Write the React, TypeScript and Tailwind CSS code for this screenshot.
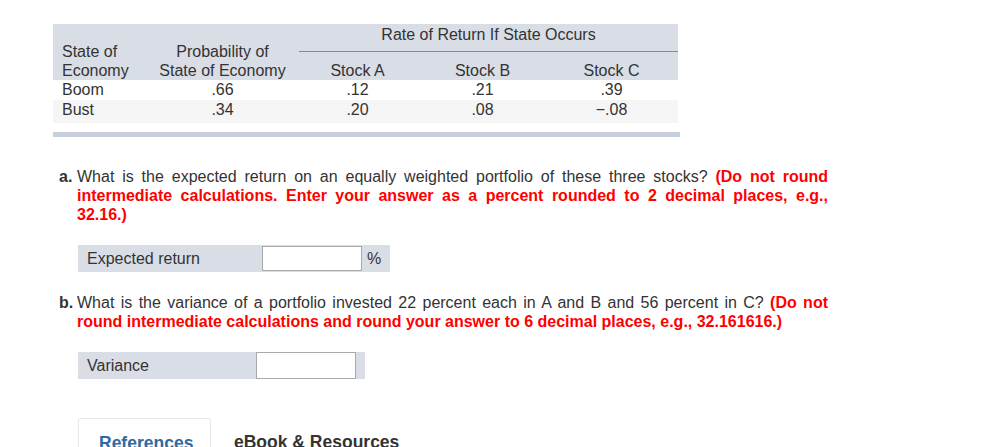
import React from "react";

const font = { fontFamily: '"Liberation Sans", Arial, sans-serif' };

export default function App() {
  return (
    <div className="w-[1001px] h-[447px] overflow-hidden bg-white text-[#333]" style={font}>
      <div className="pl-[53px] pt-[24px]">
        {/* Table */}
        <div className="w-[625px] text-[16px]">
          <div className="bg-[#d9dde6] grid grid-cols-[97px_145px_125px_125px_133px] grid-rows-[28px_28px] h-[56px]">
            <div className="row-span-2 col-start-1 row-start-1 flex flex-col justify-end pl-[9px] leading-[19px]">
              <div>State of</div>
              <div>Economy</div>
            </div>
            <div className="row-span-2 col-start-2 row-start-1 flex flex-col justify-end items-center leading-[19px]">
              <div>Probability of</div>
              <div>State of Economy</div>
            </div>
            <div className="col-start-3 col-span-3 row-start-1 pl-[4px]">
              <div className="h-full border-b border-[#8a8a8a] flex items-start justify-center pt-[1px] leading-[19px]">
                Rate of Return If State Occurs
              </div>
            </div>
            <div className="col-start-3 row-start-2 flex items-end justify-center leading-[19px]">Stock A</div>
            <div className="col-start-4 row-start-2 flex items-end justify-center leading-[19px]">Stock B</div>
            <div className="col-start-5 row-start-2 flex items-end justify-center leading-[19px]">Stock C</div>
          </div>
          <div className="grid grid-cols-[97px_145px_125px_125px_133px] h-[20px] leading-[20px] bg-white">
            <div className="pl-[9px]">Boom</div>
            <div className="text-center">.66</div>
            <div className="text-center">.12</div>
            <div className="text-center">.21</div>
            <div className="text-center">.39</div>
          </div>
          <div className="grid grid-cols-[97px_145px_125px_125px_133px] h-[23px] leading-[20px] bg-[#f5f5f5]">
            <div className="pl-[9px]">Bust</div>
            <div className="text-center">.34</div>
            <div className="text-center">.20</div>
            <div className="text-center">.08</div>
            <div className="text-center">−.08</div>
          </div>
        </div>
        <div className="mt-[9px] w-[627px] h-[5px] bg-[#c8cfdc]" />
      </div>

      {/* Part a */}
      <div className="pl-[59px] mt-[30px] flex w-[828px] text-[16px] leading-[19px]">
        <span className="w-[18px] font-bold shrink-0">a.</span>
        <p className="flex-1 text-justify">
          What is the expected return on an equally weighted portfolio of these three stocks?{" "}
          <b className="text-[#f00]">
            (Do not round intermediate calculations. Enter your answer as a percent rounded to 2 decimal places, e.g., 32.16.)
          </b>
        </p>
      </div>

      <div className="ml-[78px] mt-[21px] w-[312px] h-[27px] bg-[#d9dde6] flex items-center text-[16px]">
        <span className="pl-[9px] w-[184px]">Expected return</span>
        <div className="w-[100px] h-[25px] bg-white border border-[#a9a9a9]" />
        <span className="pl-[5px]">%</span>
      </div>

      {/* Part b */}
      <div className="pl-[59px] mt-[21px] flex w-[828px] text-[16px] leading-[19px]">
        <span className="w-[18px] font-bold shrink-0">b.</span>
        <p className="flex-1 text-justify">
          What is the variance of a portfolio invested 22 percent each in A and B and 56 percent in C?{" "}
          <b className="text-[#f00]">
            (Do not round intermediate calculations and round your answer to 6 decimal places, e.g., 32.161616.)
          </b>
        </p>
      </div>

      <div className="ml-[78px] mt-[21px] w-[287px] h-[27px] bg-[#d9dde6] flex items-center text-[16px]">
        <span className="pl-[9px] w-[178px]">Variance</span>
        <div className="w-[100px] h-[27px] bg-white border border-[#a9a9a9]" />
      </div>

      {/* Tabs */}
      <div className="ml-[78px] mt-[39px] flex items-start text-[17.5px] font-bold">
        <div className="w-[133px] h-[40px] border border-[#e8e8e8] border-b-0 rounded-t-[3px] pl-[20px] pt-[11px] text-[#2f6aa3]">
          References
        </div>
        <div className="pl-[23px] pt-[11px] text-[#333]">eBook &amp; Resources</div>
      </div>
    </div>
  );
}
